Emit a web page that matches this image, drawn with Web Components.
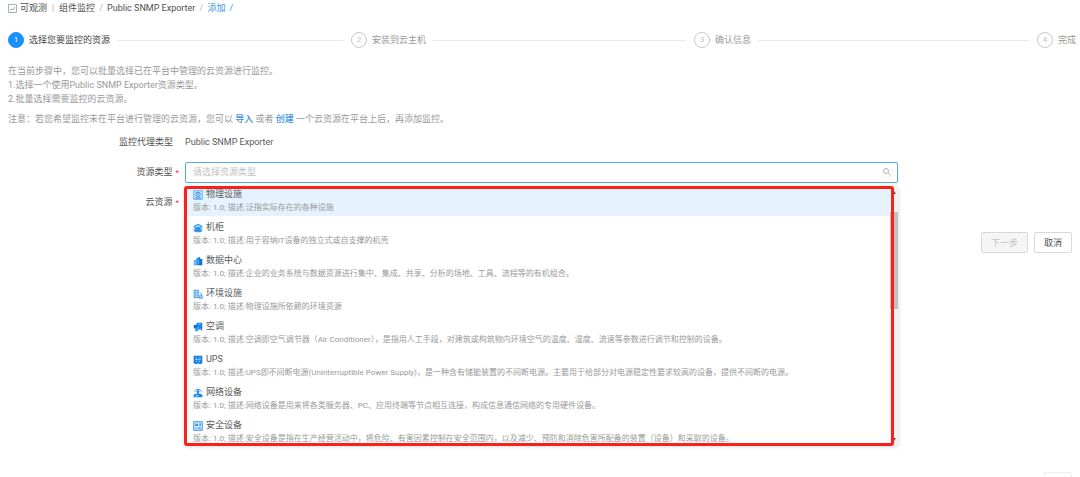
<!DOCTYPE html>
<html lang="zh-CN">
<head>
<meta charset="utf-8">
<title>可观测</title>
<style>
  * { box-sizing: border-box; }
  body {
    margin: 0;
    height: 100vh;
    overflow: hidden;
    background: #fff;
    color: #595959;
    font: 9px/14px Roboto, "Noto Sans CJK SC", sans-serif;
  }
  a { color: #3d93e0; text-decoration: none; }
  crumb-bar a { color: #505050; }
  crumb-bar a.current { color: #3d93e0; }
  .intro { padding: 16px 8px 0; color: #999; }
  .intro p { margin: 0; }
  .intro .note { margin-top: 6px; }
  .intro a { font-weight: 500; }
  form { padding: 1px 8px 0; margin: 0; }
  .actions { display: flex; justify-content: flex-end; gap: 6px; margin-top: 15px; }
  .corner { display: flex; justify-content: flex-end; margin-top: 219px; }
</style>
</head>
<body>
  <crumb-bar>
    <a href="#" class="root">可观测</a>
    <a href="#">组件监控</a>
    <a href="#">Public SNMP Exporter</a>
    <a href="#" class="current">添加</a>
  </crumb-bar>

  <step-bar>
    <step-item number="1" active>选择您要监控的资源</step-item>
    <step-item number="2">安装到云主机</step-item>
    <step-item number="3">确认信息</step-item>
    <step-item number="4" last>完成</step-item>
  </step-bar>

  <section class="intro">
    <p>在当前步骤中，您可以批量选择已在平台中管理的云资源进行监控。</p>
    <p>1.选择一个使用Public SNMP Exporter资源类型。</p>
    <p>2.批量选择需要监控的云资源。</p>
    <p class="note">注意：若您希望监控未在平台进行管理的云资源，您可以 <a href="#">导入</a> 或者 <a href="#">创建</a> 一个云资源在平台上后，再添加监控。</p>
  </section>

  <form>
    <form-row label="监控代理类型">Public SNMP Exporter</form-row>
    <resource-select label="资源类型" placeholder="请选择资源类型">
      <resource-option icon="facility" name="物理设施" selected>泛指实际存在的各种设施</resource-option>
      <resource-option icon="cabinet" name="机柜">用于容纳IT设备的独立式或自支撑的机壳</resource-option>
      <resource-option icon="datacenter" name="数据中心">企业的业务系统与数据资源进行集中、集成、共享、分析的场地、工具、流程等的有机组合。</resource-option>
      <resource-option icon="environment" name="环境设施">物理设施所依赖的环境资源</resource-option>
      <resource-option icon="air" name="空调">空调即空气调节器（Air Conditioner），是指用人工手段，对建筑或构筑物内环境空气的温度、湿度、流速等参数进行调节和控制的设备。</resource-option>
      <resource-option icon="ups" name="UPS">UPS即不间断电源(Uninterruptible Power Supply)，是一种含有储能装置的不间断电源。主要用于给部分对电源稳定性要求较高的设备，提供不间断的电源。</resource-option>
      <resource-option icon="network" name="网络设备">网络设备是用来将各类服务器、PC、应用终端等节点相互连接，构成信息通信网络的专用硬件设备。</resource-option>
      <resource-option icon="security" name="安全设备">安全设备是指在生产经营活动中，将危险、有害因素控制在安全范围内，以及减少、预防和消除危害所配备的装置（设备）和采取的设备。</resource-option>
    </resource-select>
    <form-row label="云资源" required></form-row>
    <div class="actions">
      <app-button disabled>下一步</app-button>
      <app-button>取消</app-button>
    </div>
    <div class="corner"><app-button ghost></app-button></div>
  </form>

<script>
const ICONS = {
  facility: '<path d="M1 1h12v12H1z" fill="#cfe7fc" stroke="#3a9bec"/><circle cx="7" cy="6" r="3" fill="#fff" stroke="#1684e8" stroke-width="1.4"/><path d="M6 5h2v2H6z" fill="#1684e8"/><path d="M3 11.2h8" stroke="#1684e8" stroke-width="1.4"/>',
  cabinet: '<path d="M7 1l6 3v7l-2 2H3l-2-2V4z" fill="#46a3ef"/><path d="M3 5l4-2 4 2-4 2z" fill="#bfe0fb"/><path d="M4 12V8l3-2 3 2v4M7 8v4" fill="none" stroke="#0877df" stroke-width="1.2"/><path d="M2.5 6v4M11.5 6v4" stroke="#e8f4fe"/>',
  datacenter: '<path d="M1 6l4-1v8H1z" fill="#58adf2"/><path d="M5 3l5-2v12H5z" fill="#1684e8"/><path d="M9 4h4v9H9z" fill="#0873da"/><path d="M7.500 5v6M2.500 8v3" stroke="#9bd0f8"/>',
  environment: '<path d="M1 1h3v12H1zM5 1h3v12H5z" fill="#3a9bec"/><path d="M1.5 4h2M1.5 7h2M5.500 4h2M5.500 7h2M1.500 10h2M5.500 10h2" stroke="#fff"/><path d="M9 5l3 2v2M9 9h4v4H9z" fill="#9bd0f8" stroke="#3a9bec"/>',
  air: '<path d="M5 1h8v7H5z" fill="#1684e8"/><path d="M1 4h5v5H1z" fill="#0873da"/><path d="M3 8h8v3H7v2H3z" fill="#3a9bec"/><path d="M7 3h4" stroke="#a8d5fa"/><path d="M9 8h3v4" fill="none" stroke="#0873da" stroke-width="1.5"/>',
  ups: '<path d="M1 1h12v11h-2v1H9v-1H5v1H3v-1H1z" fill="#0a7ce6"/><path d="M3 4h3M8 4h3M3 6.500h8M4 9h2M8 9h2" stroke="#b9dcfa" stroke-width="1.2"/>',
  network: '<path d="M2 5c2-4 8-4 10 0" fill="none" stroke="#3a9bec" stroke-width="1.400"/><circle cx="7" cy="5" r="2" fill="#1684e8"/><path d="M7 6v3" stroke="#1684e8" stroke-width="2"/><path d="M3 8h8l2 2v3H1v-3z" fill="#1684e8"/><path d="M3 11h5" stroke="#fff"/>',
  security: '<path d="M1 1h12v12H1z" fill="#cfe7fc" stroke="#3a9bec" stroke-width="1.400"/><path d="M3 4h4v3H3zM9 3h2v4H9zM7 9h4v2H7z" fill="#3a9bec"/><path d="M3 10h3" stroke="#1684e8"/>'
};

class CrumbBar extends HTMLElement {
    constructor() {
        super();
        const shadowRoot = this.attachShadow({mode: 'open', slotAssignment: 'manual'});
        shadowRoot.innerHTML = `
            <style>
              :host { display: block; padding: 1px 8px 0; }
              nav { display: flex; align-items: center; }
              svg { width: 9px; height: 9px; margin-right: 3px; }
              .sep { width: 12px; text-align: center; color: #b5b5b5; }
              .end { color: #3d93e0; }
            </style>
            <nav>
              <svg viewBox="0 0 9 9" fill="none" stroke="#a8b0b3"><path d="M.5.5h8v8h-8zM2 6l2-1 1 1 2-3"/></svg>
            </nav>`;
    }

    connectedCallback() {
        const nav = this.shadowRoot.querySelector('nav');
        const links = this.querySelectorAll('a');

        links.forEach((link, idx) => {
            const slot = document.createElement('slot');
            const sep = document.createElement('span');
            sep.className = idx == links.length-1 ? 'sep end' : 'sep';
            sep.textContent = idx == 0 ? '|' : '/';
            nav.append(slot, sep);
            slot.assign(link);
        });
    }
}

class StepBar extends HTMLElement {
    constructor() {
        super();
        const shadowRoot = this.attachShadow({mode: 'open'});
        shadowRoot.innerHTML = `
            <style>:host { display: flex; gap: 8px; padding: 17px 4px 0 8px; }</style>
            <slot></slot>`;
    }
}

class StepItem extends HTMLElement {
    constructor() {
        super();
        const shadowRoot = this.attachShadow({mode: 'open'});
        shadowRoot.innerHTML = `
            <style>
              :host { display: flex; flex: 1; align-items: center; color: #999; white-space: nowrap; }
              :host([last]) { flex: none; }
              :host([active]) { color: #444; }
              .dot { box-sizing: border-box; width: 16px; height: 16px; margin-right: 5px; border: 1px solid #c8c8c8;
                border-radius: 50%; color: #bfbfbf; text-align: center; font-size: 8px; line-height: 14px; }
              :host([active]) .dot { background: #1890ff; border-color: #1890ff; color: #fff; }
              .line { flex: 1; height: 1px; margin-left: 7px; background: #e8e8e8; }
              :host([last]) .line { display: none; }
            </style>
            <span class="dot">${this.getAttribute('number')}</span>
            <slot></slot>
            <span class="line"></span>`;
    }
}

// label column shared by the plain rows and the select
const ROW_STYLE = `
    :host { display: block; }
    .row { display: grid; grid-template-columns: 177px 67%; align-items: center; min-height: 30px; }
    .label { padding-right: 12px; text-align: right; color: #505050; }
    .label.required { padding-right: 6px; }
    .label.required::after { content: "*"; margin-left: 3px; font-size: 8px; color: #f5222d; }
`;

class FormRow extends HTMLElement {
    constructor() {
        super();
        const required = this.hasAttribute('required') ? 'required' : '';
        const shadowRoot = this.attachShadow({mode: 'open'});
        shadowRoot.innerHTML = `
            <style>${ROW_STYLE}</style>
            <div class="row">
              <span class="label ${required}">${this.getAttribute('label')}</span>
              <span><slot></slot></span>
            </div>`;
    }
}

class ResourceSelect extends HTMLElement {
    constructor() {
        super();
        const shadowRoot = this.attachShadow({mode: 'open'});
        shadowRoot.innerHTML = `
            <style>
              ${ROW_STYLE}
              .field { position: relative; display: flex; align-items: center; box-sizing: border-box; height: 21px;
                padding: 0 6px 0 7px; border: 1px solid #5aa9e6; border-radius: 2px; box-shadow: 0 0 1px #a6d2f5; }
              input { flex: 1; min-width: 0; padding: 0; border: 0; outline: 0; background: none; font: inherit; color: #595959; }
              input::placeholder { color: #bfbfbf; opacity: 1; }
              .search { width: 8px; height: 8px; }
              .menu { position: absolute; z-index: 1; top: 24px; left: -1px; right: -1px; height: 258px; display: flex;
                background: #fff; border-radius: 2px; box-shadow: 0 1px 5px rgba(0, 0, 0, .18); }
              .list { flex: 1; min-width: 0; overflow: hidden; }
              .track { display: flex; flex-direction: column; width: 8px; background: #f1f1f1; }
              .thumb { height: 97px; margin-top: 17px; background: #c1c1c1; }
              .arrow { width: 8px; height: 8px; fill: #505050; }
              .arrow.down { margin-top: auto; }
              .frame { position: absolute; inset: -1px 4px -1px -1px; border: 3px solid #fa2218; border-radius: 3px; pointer-events: none; }
            </style>
            <div class="row">
              <label class="label required" for="type">${this.getAttribute('label')}</label>
              <div class="field">
                <input id="type" type="text" role="combobox" aria-expanded="true" aria-controls="list" placeholder="${this.getAttribute('placeholder')}">
                <svg class="search" viewBox="0 0 8 8" fill="none" stroke="#b5b5b5"><circle cx="3" cy="3" r="2.500"/><path d="M5 5l2.500 2.500"/></svg>
                <div class="menu">
                  <div class="list" id="list" role="listbox"><slot></slot></div>
                  <div class="track">
                    <svg class="arrow" viewBox="0 0 8 8"><path d="M2 7l2-3 2 3z"/></svg>
                    <div class="thumb"></div>
                    <svg class="arrow down" viewBox="0 0 8 8"><path d="M2 1l2 3 2-3z"/></svg>
                  </div>
                  <div class="frame"></div>
                </div>
              </div>
            </div>`;
    }

    connectedCallback() {
        this.shadowRoot.getElementById('list').scrollTop = 4;
        this.addEventListener('click', this._onClick);
    }

    disconnectedCallback() {
        this.removeEventListener('click', this._onClick);
    }

    _onClick(event) {
        if (event.target instanceof ResourceOption) {
            this.querySelectorAll('resource-option').forEach((option) => {
                option.toggleAttribute('selected', option === event.target);
            });
            this.shadowRoot.getElementById('type').value = event.target.getAttribute('name');
        }
    }
}

class ResourceOption extends HTMLElement {
    constructor() {
        super();
        const shadowRoot = this.attachShadow({mode: 'open'});
        shadowRoot.innerHTML = `
            <style>
              :host { display: block; box-sizing: border-box; height: 33px; padding: 4px 8px 2px; white-space: nowrap; cursor: pointer; }
              :host([selected]) { background: #e6f2fe; }
              .title { display: flex; align-items: center; gap: 3px; height: 14px; }
              .title svg { width: 10px; height: 10px; margin-top: 2px; }
              .desc { height: 13px; line-height: 13px; font-size: 8px; color: #999; }
            </style>
            <div class="title"><svg viewBox="0 0 14 14">${ICONS[this.getAttribute('icon')]}</svg><span>${this.getAttribute('name')}</span></div>
            <div class="desc">版本: 1.0; 描述:<slot></slot></div>`;
    }

    connectedCallback() {
        this.setAttribute('role', 'option');
    }
}

class AppButton extends HTMLElement {
    constructor() {
        super();
        const disabled = this.hasAttribute('disabled') ? 'disabled' : '';
        const shadowRoot = this.attachShadow({mode: 'open'});
        shadowRoot.innerHTML = `
            <style>
              :host { display: block; }
              button { display: block; box-sizing: border-box; height: 21px; min-width: 28px; padding: 0 9px; border: 1px solid #d9d9d9;
                border-radius: 2px; background: #fff; color: #505050; font: inherit; }
              button:disabled { background: #f5f5f5; color: #c4c4c4; }
              :host([ghost]) button { border-color: #f0f0f0; }
            </style>
            <button type="button" ${disabled}><slot></slot></button>`;
    }
}

customElements.define('crumb-bar', CrumbBar);
customElements.define('step-bar', StepBar);
customElements.define('step-item', StepItem);
customElements.define('form-row', FormRow);
customElements.define('resource-option', ResourceOption);
customElements.define('resource-select', ResourceSelect);
customElements.define('app-button', AppButton);
</script>
</body>
</html>
